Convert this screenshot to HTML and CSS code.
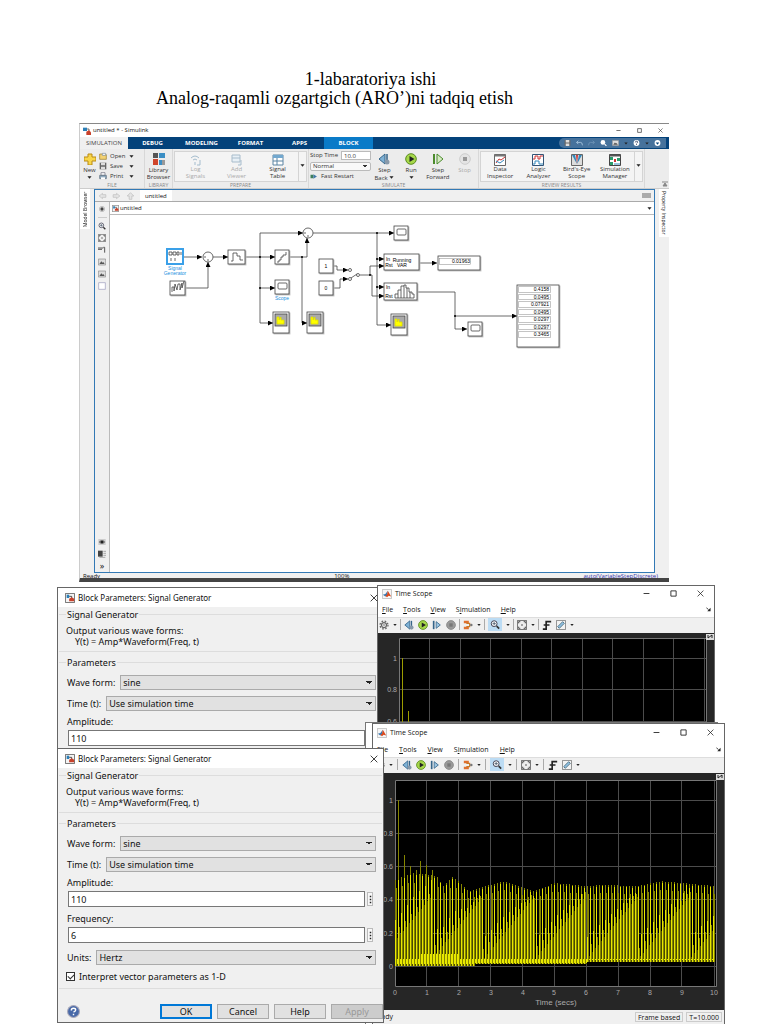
FILE: index.html
```html
<!DOCTYPE html>
<html lang="uz">
<head>
<meta charset="UTF-8">
<title>1-labaratoriya ishi</title>
<link rel="stylesheet" href="styles.css">
</head>
<body>
  <!-- shared icons -->
  <svg class="defs" width="0" height="0">
    <symbol id="i-app" viewBox="0 0 12 12"><path d="M0 1h6v5H0z" fill="#2b7fb8"/><path d="M6 3h3v4" fill="none" stroke="#333"/><path d="M5 7l4-2 3 3v4H5z" fill="#c8402a"/></symbol>
    <symbol id="i-appbox" viewBox="0 0 12 12"><path d="M.5.5h11v11H.5z" fill="#f4f4f4" stroke="#555"/><path d="M2 2h3v4H2z" fill="#2b7fb8"/><path d="M5 4h3v3" fill="none" stroke="#333"/><path d="M5 7l3-2 3 2v3H5z" fill="#c8402a"/></symbol>
    <symbol id="i-matlab" viewBox="0 0 12 12"><path d="M.5.5h11v11H.5z" fill="#f6f6f6" stroke="#bbb"/><path d="M1 7l3-1 3-4-1 6-2 1z" fill="#3a78b0"/><path d="M7 2l4 7-3-1-2 2-2-2 2-1z" fill="#d9481c"/></symbol>
    <symbol id="i-new" viewBox="0 0 12 12"><path d="M4 1h4v3h4v4H8v4H4V8H0V4h4z" fill="#f8d64a" stroke="#b98a12"/></symbol>
    <symbol id="i-open" viewBox="0 0 12 12"><path d="M1 3h4l1 1h5v7H1z" fill="#f3d274" stroke="#9a7a26"/><path d="M5 2h5v3H5z" fill="#fff" stroke="#789"/></symbol>
    <symbol id="i-save" viewBox="0 0 12 12"><path d="M1 1h10v10H1z" fill="#666"/><path d="M3 1h6v4H3zM3 7h6v4H3z" fill="#ddd"/></symbol>
    <symbol id="i-print" viewBox="0 0 12 12"><path d="M3 1h6v4H3z" fill="#fff" stroke="#667"/><path d="M1 5h10v5H1z" fill="#8fa9be" stroke="#567"/><path d="M3 8h6v3H3z" fill="#fff"/></symbol>
    <symbol id="i-lib" viewBox="0 0 12 12"><path d="M0 0h5v5H0z" fill="#555"/><path d="M6 0h6v5H6zM6 7h3v5H6z" fill="#3b8ec4"/><path d="M0 6h5v6H0z" fill="#cf452c"/><path d="M9 7h3v5H9z" fill="#999"/></symbol>
    <symbol id="i-log" viewBox="0 0 12 12"><path d="M1 4q4-4 8 0M3 6q2-2 4 0M5 8v3M10 6v5H7" fill="none" stroke="#a4bccd"/></symbol>
    <symbol id="i-view" viewBox="0 0 12 12"><path d="M1 1h8v7H1zM1 4h8M10 6v5H7" fill="#e8f0f6" stroke="#a8bccb"/></symbol>
    <symbol id="i-table" viewBox="0 0 12 12"><path d="M1 1h10v10H1z" fill="#fff" stroke="#5b84a3"/><path d="M1 1h10v3H1z" fill="#72a8cf"/><path d="M1 7h10M5 4v7" stroke="#5b84a3"/></symbol>
    <symbol id="i-back" viewBox="0 0 12 12"><path d="M7 1v10L1 6z" fill="#7fb2d6" stroke="#35658a"/><path d="M9 1v10" stroke="#35658a" stroke-width="1.5"/><circle cx="9" cy="9" r="2.5" fill="#89a"/></symbol>
    <symbol id="i-run" viewBox="0 0 12 12"><circle cx="6" cy="6" r="5.3" fill="#a6d84a" stroke="#5b8c1e"/><path d="M4.5 3l5 3-5 3z" fill="#222"/></symbol>
    <symbol id="i-fwd" viewBox="0 0 12 12"><path d="M5 1v10l6-5z" fill="#d5eac2" stroke="#4b8b2c"/><path d="M2 1v10" stroke="#4b8b2c" stroke-width="2"/></symbol>
    <symbol id="i-fwdb" viewBox="0 0 12 12"><path d="M5 2v8l5-4z" fill="#9cc6e4" stroke="#35658a"/><path d="M2 1v10" stroke="#35658a" stroke-width="2"/></symbol>
    <symbol id="i-stop" viewBox="0 0 12 12"><circle cx="6" cy="6" r="5.3" fill="#e4e4e4" stroke="#ccc"/><path d="M4 4h4v4H4z" fill="#999"/></symbol>
    <symbol id="i-stopd" viewBox="0 0 12 12"><circle cx="6" cy="6" r="5.3" fill="#999" stroke="#888"/><path d="M4 4h4v4H4z" fill="#777"/></symbol>
    <symbol id="i-fast" viewBox="0 0 12 12"><path d="M0 3h5v6H0z" fill="#3f7f5c"/><path d="M5 2l6 4-6 4z" fill="#3e78a8"/></symbol>
    <symbol id="i-data" viewBox="0 0 12 12"><path d="M.5.5h11v11H.5z" fill="#fff" stroke="#666"/><path d="M.5.5h11v2H.5z" fill="#777"/><path d="M2 9l3-4 2 1 4-3" fill="none" stroke="#c33"/><path d="M2 7l4 2 4-3" fill="none" stroke="#38b"/></symbol>
    <symbol id="i-logic" viewBox="0 0 12 12"><path d="M.5.5h11v11H.5z" fill="#fff" stroke="#357"/><path d="M1 5h2V2h3v3h2V2h3" fill="none" stroke="#c33"/><path d="M1 10h2V7h4v3h4" fill="none" stroke="#38b"/></symbol>
    <symbol id="i-bird" viewBox="0 0 12 12"><path d="M.5.5h11v11H.5z" fill="#ddd" stroke="#666"/><path d="M1 1h3l2 9z" fill="#38b"/><path d="M5 1h2l-1 9z" fill="#c33"/><path d="M11 1H8l-2 9z" fill="#38b"/></symbol>
    <symbol id="i-mgr" viewBox="0 0 12 12"><path d="M.5.5h11v11H.5z" fill="#fff" stroke="#444"/><path d="M.5.5h11v2H.5z" fill="#555"/><path d="M1 3h3v3H1zM8 4h3v3H8zM1 8h3v3H1z" fill="#2a9b6b"/><path d="M5 5h2v3H5z" fill="#c33"/><path d="M5 10h6" stroke="#38b"/></symbol>
    <symbol id="i-gear" viewBox="0 0 12 12"><circle cx="6" cy="6" r="3" fill="none" stroke="#666" stroke-width="1.5"/><circle cx="6" cy="6" r="4.8" fill="none" stroke="#666" stroke-width="1.5" stroke-dasharray="2 1.8"/><circle cx="6" cy="6" r="1" fill="#666"/></symbol>
    <symbol id="i-trig" viewBox="0 0 12 12"><path d="M1 1h6v3H1zM1 8h6v3H1z" fill="#e0702e"/><path d="M4 4h4v4H4" fill="none" stroke="#c77a2a" stroke-width="1.5"/><circle cx="10" cy="6" r="1.5" fill="#777"/></symbol>
    <symbol id="i-zoom" viewBox="0 0 12 12"><circle cx="5" cy="5" r="3.5" fill="#fff" stroke="#445" stroke-width="1.2"/><path d="M8 8l3 3" stroke="#333" stroke-width="2"/><path d="M3 5h4M5 3v4" stroke="#456"/></symbol>
    <symbol id="i-fit" viewBox="0 0 12 12"><path d="M.5.5h11v11H.5z" fill="#eee" stroke="#555"/><path d="M2 4V2h2M8 2h2v2M10 8v2H8M4 10H2V8" fill="none" stroke="#333"/><path d="M5 5h2v2H5z" fill="#777"/></symbol>
    <symbol id="i-edge" viewBox="0 0 12 12"><path d="M1 11h4V2h6M2 6h7" fill="none" stroke="#222" stroke-width="2"/></symbol>
    <symbol id="i-ruler" viewBox="0 0 12 12"><path d="M.5.5h11v11H.5z" fill="#f2f2f2" stroke="#777"/><path d="M2 8l6-6 2 2-6 6z" fill="#8ec0e2" stroke="#467"/></symbol>
    <symbol id="i-help" viewBox="0 0 12 12"><circle cx="6" cy="6" r="5.5" fill="#4869a8" stroke="#aab"/><path d="M4 5q0-2 2-2t2 1.500q0 1-2 2M6 8v1.500" fill="none" stroke="#fff" stroke-width="1.3"/></symbol>
    <symbol id="i-left" viewBox="0 0 12 12"><path d="M1 6l5-4v2h5v4H6v2z" fill="#e4e4e4" stroke="#bbb"/></symbol>
    <symbol id="i-right" viewBox="0 0 12 12"><path d="M11 6L6 2v2H1v4h5v2z" fill="#e4e4e4" stroke="#bbb"/></symbol>
    <symbol id="i-up" viewBox="0 0 12 12"><path d="M6 1L1 6h3v5h4V6h3z" fill="#e4e4e4" stroke="#bbb"/></symbol>
    <symbol id="i-eye" viewBox="0 0 12 12"><circle cx="6" cy="6" r="4" fill="none" stroke="#aaa"/><circle cx="6" cy="6" r="2.5" fill="#444"/></symbol>
    <symbol id="i-eyebox" viewBox="0 0 12 12"><path d="M.5 1.500h11v9H.5z" fill="#ccc"/><path d="M1 6q5-6 10 0-5 6-10 0z" fill="#777"/><circle cx="6" cy="6" r="2" fill="#222"/></symbol>
    <symbol id="i-book" viewBox="0 0 12 12"><path d="M0 1h7v9H0z" fill="#444"/><path d="M8 2h4M8 5h4M8 8h4M2 11h9" stroke="#888"/></symbol>
    <symbol id="i-arrow" viewBox="0 0 12 12"><path d="M0 3h8M0 5h6M8 2h2v8" fill="none" stroke="#555" stroke-width="1.5"/></symbol>
    <symbol id="i-pic" viewBox="0 0 12 12"><path d="M.5 1.500h11v9H.5z" fill="#ddd" stroke="#888"/><path d="M2 9l3-4 2 2 1-1 2 3z" fill="#555"/></symbol>
    <symbol id="i-box" viewBox="0 0 12 12"><path d="M1 1h10v10H1z" fill="#fff" stroke="#99b"/></symbol>
    <symbol id="i-undo" viewBox="0 0 12 12"><path d="M4 2L1 5l3 3M1 5h7q3 0 3 5" fill="none" stroke="#a9c6df" stroke-width="1.5"/></symbol>
    <symbol id="i-q" viewBox="0 0 12 12"><circle cx="6" cy="6" r="5" fill="#fff"/><path d="M4 5q0-2 2-2t2 1.500q0 1-2 2M6 8v1.500" fill="none" stroke="#346" stroke-width="1.5"/></symbol>
    <symbol id="i-qdown" viewBox="0 0 12 12"><circle cx="6" cy="6" r="5" fill="#fff"/><path d="M3 5h6L6 9z" fill="#04427a"/></symbol>
    <symbol id="i-lens" viewBox="0 0 12 12"><circle cx="5" cy="5" r="4" fill="#fff"/><path d="M8 8l3 3" stroke="#fff" stroke-width="2"/></symbol>
    <symbol id="i-min" viewBox="0 0 12 12"><path d="M1 6h10" stroke="#222" stroke-width="1.5"/></symbol>
    <symbol id="i-max" viewBox="0 0 12 12"><path d="M1.500 1.500h9v9h-9z" fill="none" stroke="#222" stroke-width="1.5"/></symbol>
    <symbol id="i-close" viewBox="0 0 12 12"><path d="M1 1l10 10M11 1L1 11" stroke="#222" stroke-width="1.3"/></symbol>
    <symbol id="i-down" viewBox="0 0 12 12"><path d="M1 3h10L6 9z" fill="#222"/></symbol>
    <symbol id="i-dock" viewBox="0 0 12 12"><path d="M1 2l5 4" stroke="#222" stroke-width="2"/><path d="M11 2v8H3z" fill="#222"/></symbol>
    <symbol id="i-dots" viewBox="0 0 4 12"><path d="M1 1h2v2H1zM1 5h2v2H1zM1 9h2v2H1z" fill="#222"/></symbol>
  </svg>

  <header class="heading">
    <p class="first">1-labaratoriya ishi</p>
    <p>Analog-raqamli ozgartgich (ARO’)ni tadqiq etish</p>
  </header>

  <section class="simulink">
    <div class="sl-title">
      <svg class="ic"><use href="#i-app"/></svg><span>untitled * - Simulink</span>
      <div class="sl-win"><svg><use href="#i-min"/></svg><svg><use href="#i-max"/></svg><svg><use href="#i-close"/></svg></div>
    </div>
    <nav class="sl-tabs">
      <button class="on">SIMULATION</button><button>DEBUG</button><button>MODELING</button><button>FORMAT</button><button>APPS</button><button class="blk">BLOCK</button>
      <div class="quick">
        <svg><use href="#i-save"/></svg><svg><use href="#i-undo"/></svg><svg class="faint"><use href="#i-undo"/></svg><svg><use href="#i-lens"/></svg><svg><use href="#i-pic"/></svg><svg class="dn"><use href="#i-down"/></svg><svg><use href="#i-q"/></svg><svg class="dn"><use href="#i-down"/></svg><svg><use href="#i-qdown"/></svg>
      </div>
    </nav>
    <div class="ribbon">
      <div class="group file">
        <div class="row">
          <button class="big new"><svg><use href="#i-new"/></svg>New<svg class="dn"><use href="#i-down"/></svg></button>
          <div class="list">
            <button><svg><use href="#i-open"/></svg><span>Open</span><svg class="dn"><use href="#i-down"/></svg></button>
            <button><svg><use href="#i-save"/></svg><span>Save</span><svg class="dn"><use href="#i-down"/></svg></button>
            <button><svg><use href="#i-print"/></svg><span>Print</span><svg class="dn"><use href="#i-down"/></svg></button>
          </div>
        </div>
        <small>FILE</small>
      </div>
      <div class="group lib">
        <div class="row"><button class="big"><svg><use href="#i-lib"/></svg>Library<br>Browser</button></div>
        <small>LIBRARY</small>
      </div>
      <div class="group prep">
        <div class="row gallery">
          <button class="big off"><svg><use href="#i-log"/></svg>Log<br>Signals</button>
          <button class="big off"><svg><use href="#i-view"/></svg>Add<br>Viewer</button>
          <button class="big"><svg><use href="#i-table"/></svg>Signal<br>Table</button>
          <button class="more" aria-label="More"><svg class="dn"><use href="#i-down"/></svg></button>
        </div>
        <small>PREPARE</small>
      </div>
      <div class="group simu">
        <div class="row">
          <div class="opts">
            <div class="stoprow"><label for="stop">Stop Time</label><input id="stop" value="10.0"></div>
            <select aria-label="Mode"><option>Normal</option></select>
            <button class="fast"><svg><use href="#i-fast"/></svg>Fast Restart</button>
          </div>
          <button class="big"><svg><use href="#i-back"/></svg>Step<br><span>Back <svg class="dn"><use href="#i-down"/></svg></span></button>
          <button class="big"><svg><use href="#i-run"/></svg>Run<svg class="dn"><use href="#i-down"/></svg></button>
          <button class="big"><svg><use href="#i-fwd"/></svg>Step<br>Forward</button>
          <button class="big off"><svg><use href="#i-stop"/></svg>Stop</button>
        </div>
        <small>SIMULATE</small>
      </div>
      <div class="group rev">
        <div class="row gallery">
          <button class="big"><svg><use href="#i-data"/></svg>Data<br>Inspector</button>
          <button class="big"><svg><use href="#i-logic"/></svg>Logic<br>Analyzer</button>
          <button class="big"><svg><use href="#i-bird"/></svg>Bird's-Eye<br>Scope</button>
          <button class="big"><svg><use href="#i-mgr"/></svg>Simulation<br>Manager</button>
          <button class="more" aria-label="More"><svg class="dn"><use href="#i-down"/></svg></button>
        </div>
        <small>REVIEW RESULTS</small>
      </div>
      <div class="collapse"><svg viewBox="0 0 6 6"><path d="M0 1h6M3 2L1 5h4z" stroke="#888" fill="#888"/></svg></div>
    </div>

    <div class="sl-body">
      <aside class="side"><span>Model Browser</span></aside>
      <div class="editor">
        <div class="docbar">
          <svg><use href="#i-left"/></svg><svg><use href="#i-right"/></svg><svg><use href="#i-up"/></svg>
          <b>untitled</b>
          <i></i>
        </div>
        <div class="work">
          <div class="tools">
            <svg><use href="#i-eye"/></svg>
            <hr>
            <svg><use href="#i-zoom"/></svg><svg><use href="#i-fit"/></svg><svg><use href="#i-arrow"/></svg><svg><use href="#i-pic"/></svg><svg><use href="#i-pic"/></svg><svg><use href="#i-box"/></svg>
            <div class="low"><svg><use href="#i-eyebox"/></svg><svg><use href="#i-book"/></svg><span>»</span></div>
          </div>
          <div class="sheet">
            <div class="crumb"><svg><use href="#i-appbox"/></svg>untitled<svg class="dn"><use href="#i-down"/></svg></div>
            <svg class="model" viewBox="110 215 544 357">
              <defs>
                <marker id="ar" viewBox="0 0 6 6" refX="6" refY="3" markerWidth="5" markerHeight="5" markerUnits="userSpaceOnUse" orient="auto"><path d="M0 0l6 3-6 3z"/></marker>
                <g id="scope"><rect class="b" width="14" height="14"/><rect x="3" y="3" width="9" height="6" rx="1"/></g>
                <g id="spec"><rect class="b" width="16" height="21"/><rect x="2" y="2" width="12" height="12" fill="#aaa"/><path d="M4 12V5h2v3l2-3v3h3v4z" fill="#ff0" stroke="#dd0"/></g>
              </defs>
              <g class="wires">
                <path class="a" d="M184 257h18"/><path class="a" d="M213 257h15"/><path class="a" d="M185 288h23v-26"/>
                <path class="a" d="M245 257h30"/><path class="a" d="M260 257v-24h43"/><path class="a" d="M260 257v31h15"/><path class="a" d="M260 288v35h13"/>
                <path class="a" d="M289 257h18v-19"/><path class="a" d="M302 257v66h5"/>
                <path class="a" d="M313 233h81"/><path class="a" d="M377 233v26h7"/><path class="a" d="M377 259v28h7"/><path class="a" d="M377 287v38h14"/>
                <path class="a" d="M333 266h4v4h11"/><path class="a" d="M333 288h7v-9h8"/><path d="M351 278l6-4M360 275h12v21"/>
                <path class="a" d="M370 275v-9h14"/><path class="a" d="M372 296h12"/>
                <path class="a" d="M419 263h18"/><path d="M417 292h38v24"/><path class="a" d="M455 316h62"/><path class="a" d="M455 316v13h12"/>
              </g>
              <g class="dots"><circle cx="260" cy="257" r="1"/><circle cx="260" cy="288" r="1"/><circle cx="302" cy="257" r="1"/><circle cx="377" cy="233" r="1"/><circle cx="377" cy="259" r="1"/><circle cx="377" cy="287" r="1"/><circle cx="370" cy="275" r="1"/><circle cx="455" cy="316" r="1"/></g>
              <g class="blocks">
                <rect x="167" y="249" width="16" height="15" class="sel"/>
                <path d="M169 255v-3h3v3zM173 255v-3h3v3zM177 255v-3h2v3zM181 252v3M171 258v3M175 258v3"/>
                <circle cx="208" cy="257" r="5"/><circle cx="308" cy="233" r="5"/>
                <path d="M204 257h2M207 260h2M304 233h2M307 236h2"/>
                <rect class="b" x="228" y="250" width="17" height="14"/><path d="M231 261h2v-8h4v3h3v4h3"/>
                <rect class="b" x="170" y="281" width="15" height="14"/><path d="M172 292v-5h2v4l1-7 2 6 1-6h2v6l2-7v5l2-7"/>
                <rect class="b" x="275" y="250" width="14" height="14"/><path d="M277 262h2v-2h2v-3h2v-2h3v-3"/>
                <use href="#scope" x="275" y="280"/><use href="#scope" x="394" y="226"/><use href="#scope" x="468" y="322"/>
                <use href="#spec" x="273" y="312"/><use href="#spec" x="307" y="312"/><use href="#spec" x="391" y="314"/>
                <rect class="b" x="319" y="259" width="14" height="14"/><rect class="b" x="319" y="281" width="14" height="14"/>
                <circle cx="350" cy="270" r="1.5"/><circle cx="350" cy="279" r="1.5"/><circle cx="358" cy="275" r="1.5"/>
                <rect class="b" x="384" y="254" width="35" height="16"/><rect class="b" x="384" y="283" width="33" height="17"/>
                <path d="M395 298v-4h3v-4h3v-4h3v-1h2v3h3v4h3v2h2v4zM398 298v-4M401 298v-8M404 298v-12M407 298v-10M410 298v-6"/>
                <rect class="b" x="438" y="256" width="42" height="14"/><rect class="cellbox" x="439.5" y="258.5" width="31" height="6"/>
                <rect class="b" x="517" y="285" width="42" height="62"/>
                <path class="cellbox" d="M518.500 286.500h32v6h-32zM518.500 294.500h32v5h-32zM518.500 301.500h32v6h-32zM518.500 309.500h32v5h-32zM518.500 316.500h32v6h-32zM518.500 324.500h32v5h-32zM518.500 331.500h32v6h-32z"/>
              </g>
              <g class="blue"><text x="175" y="270">Signal</text><text x="175" y="275">Generator</text><text x="282" y="300">Scope</text></g>
              <g class="txt"><text x="326" y="268">1</text><text x="326" y="290">0</text><text x="388" y="261">In</text><text x="389" y="267">Rst</text><text x="402" y="262">Running</text><text x="402" y="267">VAR</text><text x="388" y="289">In</text><text x="389" y="298">Rst</text></g>
              <g class="num"><text x="470" y="263">0.01963</text><text x="549" y="291">0.4158</text><text x="549" y="299">0.0495</text><text x="549" y="306">0.07921</text><text x="549" y="314">0.0495</text><text x="549" y="321">0.0297</text><text x="549" y="329">0.0297</text><text x="549" y="336">0.3465</text></g>
            </svg>
          </div>
        </div>
      </div>
      <aside class="side right"><span>Property Inspector</span></aside>
    </div>
    <div class="sl-status"><span>Ready</span><span>100%</span><a href="#">auto(VariableStepDiscrete)</a></div>
  </section>

  <main class="desk">
    <form class="win dialog d1">
      <div class="bar"><svg><use href="#i-appbox"/></svg>Block Parameters: Signal Generator<svg class="x"><use href="#i-close"/></svg></div>
      <fieldset><legend>Signal Generator</legend><p>Output various wave forms:</p><p class="in">Y(t) = Amp*Waveform(Freq, t)</p></fieldset>
      <fieldset class="params"><legend>Parameters</legend>
        <div class="line"><label for="w1">Wave form:</label><select id="w1"><option>sine</option></select></div>
        <div class="line"><label for="t1">Time (t):</label><select id="t1"><option>Use simulation time</option></select></div>
        <label class="lab" for="a1">Amplitude:</label>
        <div class="edit"><input id="a1" value="110"><button type="button" aria-label="More"><svg><use href="#i-dots"/></svg></button></div>
      </fieldset>
    </form>

    <section class="win scope s1">
      <div class="bar"><svg><use href="#i-matlab"/></svg>Time Scope<div class="wb"><svg><use href="#i-min"/></svg><svg><use href="#i-max"/></svg><svg><use href="#i-close"/></svg></div></div>
      <div class="menu"><a href="#"><u>F</u>ile</a><a href="#"><u>T</u>ools</a><a href="#"><u>V</u>iew</a><a href="#">S<u>i</u>mulation</a><a href="#"><u>H</u>elp</a><svg><use href="#i-dock"/></svg></div>
      <div class="tb"><svg><use href="#i-gear"/></svg><svg class="dn"><use href="#i-down"/></svg><hr><svg><use href="#i-back"/></svg><svg><use href="#i-run"/></svg><svg><use href="#i-fwdb"/></svg><svg><use href="#i-stopd"/></svg><hr><svg><use href="#i-trig"/></svg><svg class="dn"><use href="#i-down"/></svg><hr><svg class="hot"><use href="#i-zoom"/></svg><svg class="dn"><use href="#i-down"/></svg><hr><svg><use href="#i-fit"/></svg><svg class="dn"><use href="#i-down"/></svg><hr><svg><use href="#i-edge"/></svg><svg><use href="#i-ruler"/></svg><svg class="dn"><use href="#i-down"/></svg></div>
      <svg class="plot" viewBox="378 633 336 90">
        <rect x="399" y="638" width="308" height="90" fill="#000"/>
        <path class="grid" d="M429.500 638v90M460.500 638v90M490.500 638v90M521.500 638v90M551.500 638v90M582.500 638v90M612.500 638v90M643.500 638v90M673.500 638v90M704.500 638v90M399 658.500h308M399 689.500h308M399 721.500h308"/>
        <path class="frame" d="M399.500 728v-89.500h307v90"/>
        <path d="M402.500 658v70M408.500 711v20" stroke="#9c9c00"/>
        <path d="M706 634h8v6h-8z" fill="#ddd"/><path d="M708 638l4-3M708 635v3M712 635v3" stroke="#222"/>
        <g class="ylab"><text x="397" y="661">1</text><text x="397" y="692">0.8</text><text x="397" y="724">0.6</text></g>
      </svg>
    </section>

    <section class="win scope s2">
      <div class="bar"><svg><use href="#i-matlab"/></svg>Time Scope<div class="wb"><svg><use href="#i-min"/></svg><svg><use href="#i-max"/></svg><svg><use href="#i-close"/></svg></div></div>
      <div class="menu"><a href="#"><u>F</u>ile</a><a href="#"><u>T</u>ools</a><a href="#"><u>V</u>iew</a><a href="#">S<u>i</u>mulation</a><a href="#"><u>H</u>elp</a><svg><use href="#i-dock"/></svg></div>
      <div class="tb"><svg><use href="#i-gear"/></svg><svg class="dn"><use href="#i-down"/></svg><hr><svg><use href="#i-back"/></svg><svg><use href="#i-run"/></svg><svg><use href="#i-fwdb"/></svg><svg><use href="#i-stopd"/></svg><hr><svg><use href="#i-trig"/></svg><svg class="dn"><use href="#i-down"/></svg><hr><svg class="hot"><use href="#i-zoom"/></svg><svg class="dn"><use href="#i-down"/></svg><hr><svg><use href="#i-fit"/></svg><svg class="dn"><use href="#i-down"/></svg><hr><svg><use href="#i-edge"/></svg><svg><use href="#i-ruler"/></svg><svg class="dn"><use href="#i-down"/></svg></div>
      <svg class="plot" viewBox="373 773 351 237">
        <rect x="395" y="780" width="321" height="207" fill="#000"/>
        <path class="grid" d="M426.500 780v207M458.500 780v207M490.500 780v207M522.500 780v207M554.500 780v207M586.500 780v207M618.500 780v207M650.500 780v207M681.500 780v207M714.500 780v207M395 800.500h321M395 833.500h321M395 866.500h321M395 899.500h321M395 933.500h321M395 966.500h321"/>
        <path class="frame" d="M395.500 780.500h321v206h-321z"/>
        <path id="low" class="low-sig"/><path id="dim" class="dim"/><path id="sig" class="sig"/>
        <path d="M716 774h8v6h-8z" fill="#ddd"/><path d="M718 778l4-3M718 775v3M722 775v3" stroke="#222"/>
        <g class="ylab"><text x="393" y="803">1</text><text x="393" y="836">0.8</text><text x="393" y="869">0.6</text><text x="393" y="902">0.4</text><text x="393" y="936">0.2</text><text x="393" y="969">0</text></g>
        <g class="xlab"><text x="395" y="995">0</text><text x="427" y="995">1</text><text x="459" y="995">2</text><text x="491" y="995">3</text><text x="523" y="995">4</text><text x="554" y="995">5</text><text x="586" y="995">6</text><text x="618" y="995">7</text><text x="650" y="995">8</text><text x="682" y="995">9</text><text x="714" y="995">10</text><text class="cap" x="556" y="1005">Time (secs)</text></g>
      </svg>
      <div class="foot"><span>Ready</span><span class="cell">Frame based</span><span class="cell">T=10.000</span></div>
    </section>

    <form class="win dialog d2">
      <div class="bar"><svg><use href="#i-appbox"/></svg>Block Parameters: Signal Generator<svg class="x"><use href="#i-close"/></svg></div>
      <fieldset><legend>Signal Generator</legend><p>Output various wave forms:</p><p class="in">Y(t) = Amp*Waveform(Freq, t)</p></fieldset>
      <fieldset class="params"><legend>Parameters</legend>
        <div class="line"><label for="w2">Wave form:</label><select id="w2"><option>sine</option></select></div>
        <div class="line"><label for="t2">Time (t):</label><select id="t2"><option>Use simulation time</option></select></div>
        <label class="lab" for="a2">Amplitude:</label>
        <div class="edit"><input id="a2" value="110"><button type="button" aria-label="More"><svg><use href="#i-dots"/></svg></button></div>
        <label class="lab" for="f2">Frequency:</label>
        <div class="edit"><input id="f2" value="6"><button type="button" aria-label="More"><svg><use href="#i-dots"/></svg></button></div>
        <div class="line"><label for="u2">Units:</label><select id="u2"><option>Hertz</option></select></div>
        <label class="check"><input type="checkbox" checked>Interpret vector parameters as 1-D</label>
      </fieldset>
      <div class="btns"><svg><use href="#i-help"/></svg><button type="button" class="ok">OK</button><button type="button">Cancel</button><button type="button">Help</button><button type="button" disabled>Apply</button></div>
    </form>
  </main>

  <script>
    // peak level of the signal along the time axis
    const env = [[0, .52], [.5, .56], [1, .55], [1.3, .54], [1.5, .48], [1.8, .54], [2.3, .45], [2.8, .48], [3.4, .51], [4.3, .45], [5, .5], [6, .48], [6.5, .49], [7.5, .48], [8.3, .51], [9, .5], [10, .48]];
    const peaks = { 3: 1, 9: .67, 15: .6, 21: .58, 25: .63, 31: .61, 37: .58 };
    const level = t => {
      let i = 1;
      while (i < env.length - 1 && env[i][0] < t) i++;
      const [a, b] = [env[i - 1], env[i]];
      return a[1] + (b[1] - a[1]) * (t - a[0]) / (b[0] - a[0]);
    };
    const y = v => Math.round(966 - v * 166);
    const d = { sig: '', dim: '', low: '' };
    const line = (key, x, from, to) => d[key] += `M${x} ${y(from)}V${y(to)}`;
    for (let px = 0; px < 320; px++) {
      const t = px / 32;
      const x = 395.5 + px;
      const base = t < 2.5 ? 0 : t < 6 ? .01 : .025;
      const beat = (t * .62 + .3) % 1;
      if (px % 3 === 0) {
        line('dim', x, base, level(t));
        line('sig', x, base, level(t) * (px % 2 ? .98 : .35 + .6 * beat));
      } else if (px % 3 === 1) {
        line('dim', x, base, px % 2 ? level(t) * .9 : .1 + .35 * beat);
      } else {
        line('low', x, base, .04 + .38 * beat);
        line('sig', x, base + .01, t > .8 && t < 2 ? .07 : .04);
      }
      if (peaks[px]) line('dim', x, 0, peaks[px]);
    }
    for (const key in d) document.getElementById(key).setAttribute('d', d[key]);
  </script>
</body>
</html>
```
FILE: styles.css
```css
* {
  box-sizing: border-box;
}
body {
  margin: 0;
  background: #fff;
  color: #111;
  font-family: "Open Sans", "Noto Sans", sans-serif;
  font-size: 8px;
  overflow-x: hidden;
}
.defs {
  display: block;
}
button {
  border: 0;
  background: none;
  padding: 0;
  font: inherit;
  color: inherit;
}
a {
  color: inherit;
  text-decoration: none;
}
p {
  margin: 0;
}
svg {
  flex: none;
}

.heading {
  padding: 70px 99px 15px 0;
  font-family: "Liberation Serif", serif;
  font-size: 18px;
  line-height: 19px;
  text-align: center;
  color: #000;
}
.heading .first {
  padding-left: 72px;
}

/* simulink window */
.simulink {
  margin: 0 99px 0 79px;
  border-top: 1px solid #888;
  border-left: 1px solid #ccc;
  border-bottom: 4px solid #444;
  background: #f0f0f0;
  font-size: 6px;
  line-height: 7px;
}
.sl-title {
  display: flex;
  align-items: center;
  gap: 2px;
  height: 13px;
  padding: 0 6px 0 3px;
  background: #fff;
}
.sl-title .ic {
  width: 8px;
  height: 8px;
}
.sl-win {
  display: flex;
  gap: 16px;
  margin-left: auto;
}
.sl-win svg {
  width: 5px;
  height: 5px;
}
.sl-tabs {
  display: flex;
  height: 12px;
  background: #04427a;
  color: #fff;
}
.sl-tabs button {
  width: 49px;
  font-weight: bold;
}
.sl-tabs .on {
  width: 48px;
  background: #f0f0f0;
  color: #444;
  font-weight: normal;
}
.sl-tabs .blk {
  background: #0a7bc8;
}
.quick {
  display: flex;
  align-items: center;
  gap: 5px;
  margin: 1px 3px 1px auto;
  padding: 0 5px;
  background: #46729c;
  border-radius: 5px 0 0 5px;
}
.quick svg {
  width: 7px;
  height: 8px;
}
.quick .faint {
  opacity: .4;
  transform: scaleX(-1);
}
svg.dn {
  width: 5px;
  height: 5px;
}
.quick svg.dn {
  width: 4px;
}

.ribbon {
  display: flex;
  height: 40px;
  background: #ececec;
  border-bottom: 1px solid #ccc;
  color: #333;
}
.group {
  display: flex;
  flex-direction: column;
  border-right: 1px solid #d8d8d8;
}
.group small {
  margin-top: auto;
  font-size: 5px;
  line-height: 5px;
  text-align: center;
  color: #888;
}
.file {
  width: 65px;
}
.lib {
  width: 28px;
}
.prep {
  width: 136px;
}
.simu {
  width: 170px;
}
.rev {
  width: 166px;
}
.row {
  display: flex;
  height: 32px;
}
.gallery {
  margin: 2px 1px 0;
  height: 31px;
  background: #f4f4f4;
  border: 1px solid #d4d4d4;
}
.big {
  flex: 1;
  align-self: flex-start;
  display: block;
  text-align: center;
}
.big svg {
  display: block;
  width: 12px;
  height: 12px;
  margin: 4px auto 2px;
}
.big svg.dn {
  width: 5px;
  height: 5px;
  margin: 1px auto 0;
}
.big span svg.dn {
  display: inline;
}
.gallery .big svg {
  margin: 2px auto 0;
}
.off {
  color: #aaa;
}
.more {
  width: 8px;
  border-left: 1px solid #d4d4d4;
}
.new {
  flex: 0 0 19px;
}
.list {
  display: flex;
  flex-direction: column;
  justify-content: space-around;
  padding-top: 2px;
}
.list button {
  display: flex;
  align-items: center;
  gap: 3px;
}
.list svg {
  width: 8px;
  height: 8px;
}
.list span {
  width: 16px;
  text-align: left;
}
.list svg.dn {
  width: 5px;
  height: 5px;
}
.opts {
  width: 62px;
  padding: 2px 0 0 1px;
}
.stoprow {
  display: flex;
  justify-content: space-between;
  align-items: center;
}
.opts input,
.opts select {
  height: 9px;
  padding: 0 2px;
  border: 1px solid #bbb;
  background: #fff;
  font: inherit;
  color: #333;
}
.opts input {
  width: 30px;
}
select {
  appearance: none;
  border-radius: 0;
}
.opts select {
  display: block;
  width: 100%;
  margin: 2px 0;
  border-radius: 2px;
  background: linear-gradient(to bottom left, #333 50%, transparent 50%) right 5px center / 2px 3px no-repeat, linear-gradient(to bottom right, #333 50%, transparent 50%) right 3px center / 2px 3px no-repeat, #f8f8f8;
}
.fast {
  display: flex;
  align-items: center;
  gap: 3px;
}
.fast svg {
  width: 8px;
  height: 7px;
}
.collapse {
  display: flex;
  align-items: flex-end;
  margin-left: auto;
  padding: 1px;
}
.collapse svg {
  width: 6px;
  height: 6px;
}

.sl-body {
  display: flex;
  height: 384px;
}
.side {
  width: 14px;
  padding-right: 4px;
}
.side span {
  display: block;
  height: 40px;
  width: 10px;
  background: #fff;
  writing-mode: vertical-rl;
  transform: rotate(180deg);
  text-align: center;
  line-height: 10px;
  font-size: 5px;
}
.right span {
  height: 48px;
  margin-left: 4px;
  transform: none;
}
.editor {
  flex: 1;
  min-width: 0;
  display: flex;
  flex-direction: column;
  border: 1px solid #3379b5;
}
.docbar {
  display: flex;
  align-items: center;
  gap: 5px;
  height: 12px;
  padding: 0 3px;
  border-bottom: 1px solid #aaa;
}
.docbar svg {
  width: 9px;
  height: 8px;
}
.docbar b {
  align-self: stretch;
  padding: 3px 5px 0;
  background: #fff;
  font-weight: normal;
}
.docbar i {
  width: 9px;
  height: 5px;
  margin-left: auto;
  background: #aaa;
}
.work {
  flex: 1;
  display: flex;
}
.tools {
  display: flex;
  flex-direction: column;
  align-items: center;
  gap: 4px;
  width: 15px;
  padding: 3px 2px;
  border-right: 1px solid #bbb;
}
.tools svg {
  width: 8px;
  height: 8px;
}
.tools hr {
  width: 9px;
  margin: 0;
  border: 0;
  border-top: 1px solid #ccc;
}
.low {
  display: flex;
  flex-direction: column;
  align-items: center;
  gap: 4px;
  margin-top: auto;
}
.low span {
  font-size: 9px;
}
.sheet {
  flex: 1;
  min-width: 0;
  background: #fff;
}
.crumb {
  display: flex;
  align-items: center;
  gap: 1px;
  height: 13px;
  padding: 0 2px;
  border-bottom: 1px solid #bbb;
}
.crumb svg {
  width: 7px;
  height: 7px;
}
.crumb svg.dn {
  width: 5px;
  margin-left: auto;
}
.model {
  display: block;
  width: 544px;
  height: 357px;
  font-family: "Liberation Sans", sans-serif;
  font-size: 5px;
}
.wires path {
  fill: none;
  stroke: #444;
  stroke-width: .8;
}
.wires .a {
  marker-end: url(#ar);
}
.blocks,
#scope,
#spec {
  fill: #fff;
  stroke: #444;
  stroke-width: .8;
}
.blocks > path:not(:last-child) {
  fill: none;
}
.b {
  filter: drop-shadow(1px 1px 0 #bbb);
}
.blocks .cellbox {
  stroke: #888;
  stroke-width: .5;
}
.sel {
  stroke: #3aa0e8;
  stroke-width: 2;
}
.blue {
  fill: #1b8fe0;
  text-anchor: middle;
}
.txt {
  text-anchor: middle;
}
.num {
  text-anchor: end;
}
.sl-status {
  display: flex;
  justify-content: space-between;
  height: 5px;
  padding: 0 11px 0 3px;
  overflow: hidden;
}
.sl-status a {
  color: #33a;
}

/* overlapping windows */
.desk {
  position: relative;
  height: 442px;
  overflow: hidden;
}
.win {
  position: absolute;
  background: #f0f0f0;
  border: 1px solid #666;
}
.d1 {
  top: 5px;
  left: 57px;
  right: 384px;
  height: 162px;
  overflow: hidden;
}
.s1 {
  top: 3px;
  left: 377px;
  right: 53px;
}
.s2 {
  top: 141px;
  left: 372px;
  right: 43px;
  box-shadow: -6px 0 0 #fff, -7px -1px 0 #777;
}
.d2 {
  top: 166px;
  left: 57px;
  right: 384px;
}
.bar {
  display: flex;
  align-items: center;
  gap: 3px;
  background: #fff;
  font-size: 8px;
  line-height: 12px;
}
.bar svg {
  width: 10px;
  height: 10px;
}

/* parameter dialogs */
.dialog {
  font-family: "Noto Sans", sans-serif;
  font-size: 9px;
  line-height: 11px;
}
.dialog .bar {
  height: 19px;
  padding: 0 5px 0 7px;
}
.dialog .bar .x {
  width: 8px;
  height: 8px;
  margin-left: auto;
}
.dialog fieldset {
  margin: 2px 1px 0;
  padding: 5px 6px 4px 7px;
  border: 0;
  border-top: 1px solid #ddd;
  border-bottom: 1px solid #ddd;
}
.dialog legend {
  padding: 0 1px;
}
.in {
  padding-left: 9px;
}
.dialog .params {
  margin-top: 5px;
  padding: 6px 6px 6px 7px;
}
.line {
  display: flex;
  align-items: center;
  gap: 5px;
  height: 16px;
  margin-bottom: 5px;
  padding-left: 1px;
}
.line select {
  flex: 1;
  height: 15px;
  padding: 0 2px;
  border: 1px solid #aaa;
  background: linear-gradient(to bottom left, #222 50%, transparent 50%) right 6px center / 3px 3px no-repeat, linear-gradient(to bottom right, #222 50%, transparent 50%) right 3px center / 3px 3px no-repeat, #e1e1e1;
  font: inherit;
  color: #111;
}
.lab {
  display: block;
  height: 14px;
  padding-left: 1px;
}
.edit {
  display: flex;
  gap: 2px;
  height: 16px;
  margin: 0 3px 6px 2px;
}
.edit input {
  flex: 1;
  min-width: 0;
  padding: 0 2px;
  border: 1px solid #777;
  background: #fff;
  font: inherit;
  color: #111;
}
.edit button {
  display: flex;
  align-items: center;
  justify-content: center;
  width: 6px;
  margin: 1px 0;
  border: 1px solid #bbb;
  background: #f8f8f8;
}
.edit svg {
  width: 3px;
  height: 9px;
}
.check {
  display: flex;
  align-items: center;
  gap: 4px;
  height: 12px;
}
.check input {
  appearance: none;
  display: grid;
  place-items: center;
  width: 9px;
  height: 9px;
  margin: 0;
  border: 1px solid #333;
  background: #fff;
}
.check input:checked::after {
  content: "";
  width: 5px;
  height: 3px;
  border-left: 1px solid #333;
  border-bottom: 1px solid #333;
  transform: rotate(-45deg);
}
.btns {
  display: flex;
  align-items: center;
  gap: 5px;
  padding: 15px 0 3px 9px;
}
.btns svg {
  width: 13px;
  height: 13px;
  margin-right: auto;
}
.btns button {
  width: 52px;
  height: 15px;
  border: 1px solid #aaa;
  background: #e1e1e1;
}
.btns .ok {
  border: 2px solid #0078d7;
}
.btns button:disabled {
  color: #999;
  background: #ccc;
}

/* time scopes */
.scope .bar {
  height: 15px;
  padding: 0 10px 0 4px;
  font-size: 7px;
}
.wb {
  display: flex;
  gap: 20px;
  margin-left: auto;
}
.wb svg {
  width: 7px;
  height: 7px;
}
.menu {
  display: flex;
  align-items: center;
  gap: 10px;
  height: 16px;
  padding: 0 3px 0 4px;
  background: #fff;
  font-size: 7px;
}
.menu svg {
  width: 5px;
  height: 5px;
  margin-left: auto;
}
.tb {
  display: flex;
  align-items: center;
  gap: 4px;
  height: 16px;
  padding: 0 1px 2px;
  border-top: 1px solid #ddd;
}
.tb svg {
  width: 10px;
  height: 10px;
}
.tb svg.dn {
  width: 4px;
  height: 4px;
}
.tb hr {
  width: 1px;
  height: 11px;
  margin: 0 -1px;
  border: 0;
  background: #aaa;
}
.tb .hot {
  width: 14px;
  height: 13px;
  padding: 1px 2px;
  background: #bcdcf4;
}
.s2 .bar {
  height: 17px;
}
.s2 .menu {
  gap: 11px;
}
.s2 .tb {
  padding-left: 2px;
}
.s2 .tb hr {
  margin: 0;
}
.plot {
  display: block;
  width: 100%;
  background: #262626;
  font-family: "Liberation Sans", sans-serif;
  font-size: 7px;
}
.grid {
  fill: none;
  stroke: #4c4c4c;
}
.frame {
  fill: none;
  stroke: #777;
}
.sig {
  stroke: #e8e800;
}
.dim {
  stroke: #858500;
}
.low-sig {
  stroke: #4a4a00;
}
.ylab {
  fill: #aaa;
  text-anchor: end;
}
.xlab {
  fill: #aaa;
  text-anchor: middle;
}
.cap {
  font-size: 8px;
}
.foot {
  display: flex;
  gap: 3px;
  height: 14px;
  padding: 2px 2px 2px 0;
  font-size: 7px;
  line-height: 10px;
}
.foot span:first-child {
  margin-right: auto;
}
.cell {
  padding: 0 2px;
  border: 1px solid #ccc;
  line-height: 9px;
}
```
